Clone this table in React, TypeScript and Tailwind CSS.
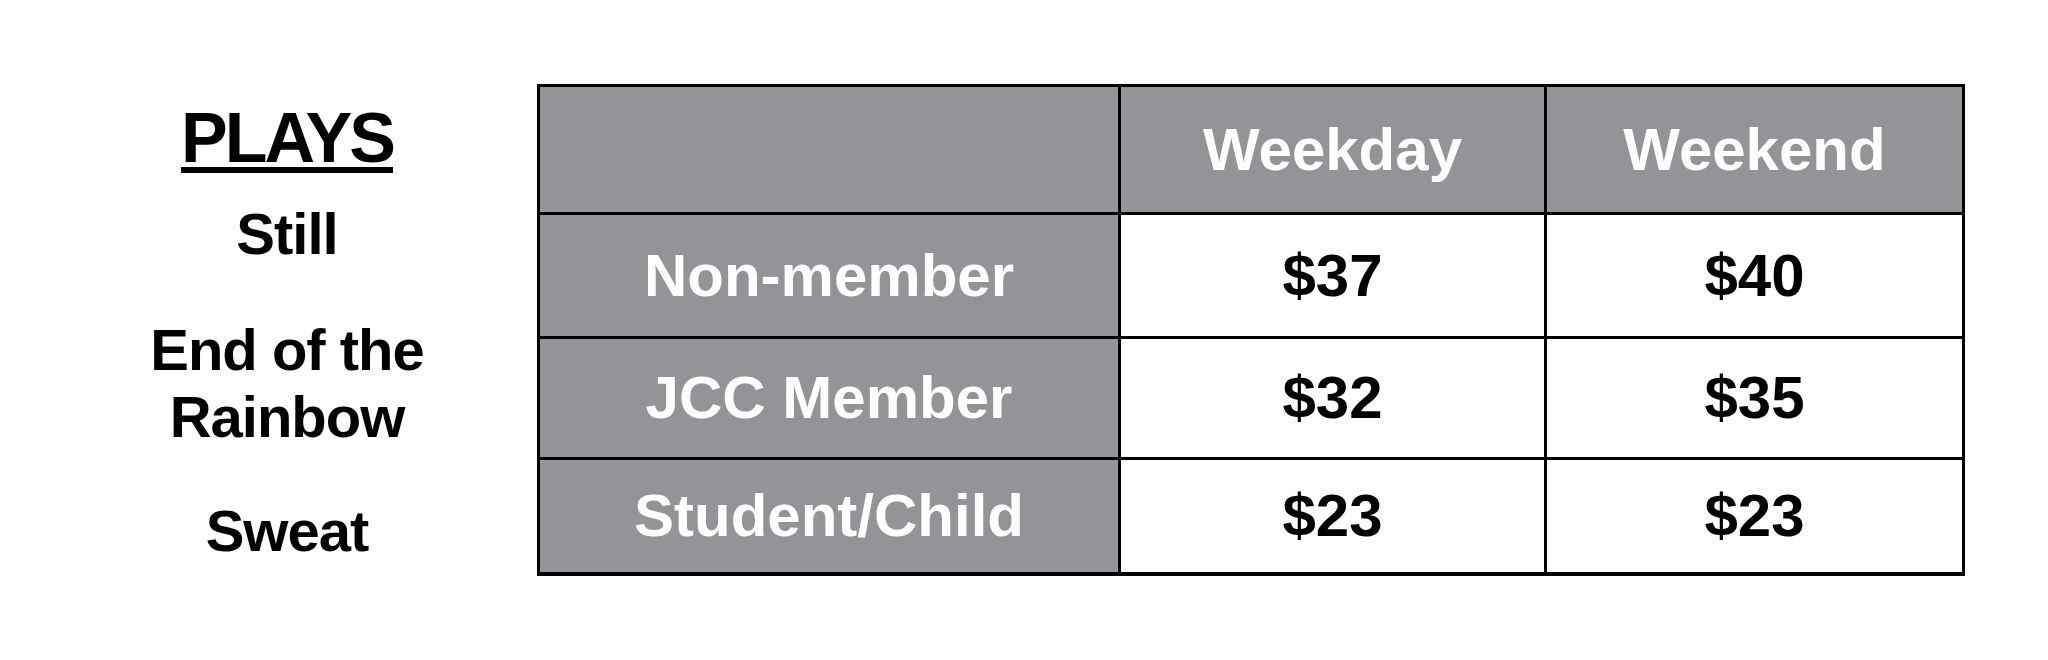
const font = "font-['Liberation_Sans',Arial,sans-serif] font-bold";

const rows = [
  { label: 'Non-member', weekday: '$37', weekend: '$40', h: 'h-[121px]' },
  { label: 'JCC Member', weekday: '$32', weekend: '$35', h: 'h-[118px]' },
  { label: 'Student/Child', weekday: '$23', weekend: '$23', h: 'h-[112px]' },
];

export default function App() {
  return (
    <div className={`w-[2048px] h-[660px] bg-white flex items-start ${font}`}>
      {/* Left column - plays list */}
      <div className="ml-[100px] w-[374px] pt-[103px] flex flex-col items-center text-black text-center">
        <div className="text-[70px] leading-none tracking-[-3px] underline decoration-[6px] underline-offset-[5px]">
          PLAYS
        </div>
        <div className="mt-[27px] text-[58px] leading-[67px] tracking-[-1px]">Still</div>
        <div className="mt-[49px] text-[58px] leading-[67px] tracking-[-1px]">
          <div>End of the</div>
          <div>Rainbow</div>
        </div>
        <div className="mt-[47px] text-[58px] leading-[67px] tracking-[-1px]">Sweat</div>
      </div>

      {/* Price table */}
      <div className="ml-[63px] mt-[84px] bg-black p-[3px] pb-[4px] grid grid-cols-[578px_423px_415px] gap-[3px] text-[60px] leading-none">
        <div className="h-[125px] bg-[#939498]"></div>
        <div className="h-[125px] bg-[#939498] text-white flex items-center justify-center">Weekday</div>
        <div className="h-[125px] bg-[#939498] text-white flex items-center justify-center">Weekend</div>
        {rows.map((r) => (
          <div key={r.label} className="contents">
            <div className={`${r.h} bg-[#939498] text-white flex items-center justify-center`}>{r.label}</div>
            <div className={`${r.h} bg-white text-black flex items-center justify-center`}>{r.weekday}</div>
            <div className={`${r.h} bg-white text-black flex items-center justify-center`}>{r.weekend}</div>
          </div>
        ))}
      </div>
    </div>
  );
}
